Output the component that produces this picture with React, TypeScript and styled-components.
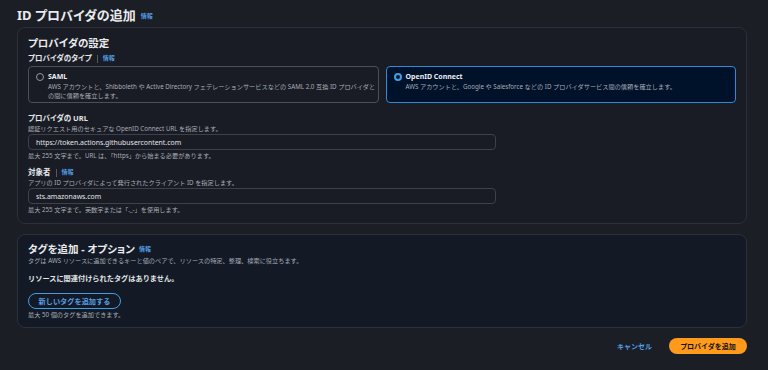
import React from "react";
import styled, { createGlobalStyle } from "styled-components";

const Global = createGlobalStyle`
  html, body { margin: 0; padding: 0; background: #1b1e25; }
  body { font-family: "Noto Sans", "Noto Sans CJK JP", sans-serif; color: #d5d9df; }
  * { box-sizing: border-box; }
`;

const Page = styled.div`
  width: 768px;
  height: 370px;
  padding: 2px 21px 0 17px;
  display: flex;
  flex-direction: column;
  overflow: hidden;
`;

const Title = styled.h1`
  margin: 0;
  height: 25px;
  display: flex;
  align-items: center;
  gap: 5px;
  font-size: 13px;
  font-weight: 700;
  color: #e9ebed;
  line-height: 20px;
  font-feature-settings: "palt";
`;

const Info = styled.span`
  font-size: 6px;
  font-weight: 700;
  color: #539fe5;
  line-height: 8px;
  position: relative;
  top: 1px;
`;

const Panel = styled.section<{ $tint?: boolean }>`
  border: 1px solid #2c3039;
  border-radius: 8px;
  background: ${(p) => (p.$tint ? "#131a26" : "#191c24")};
  padding: 7px 10px 0 10px;
  display: flex;
  flex-direction: column;
`;

const PanelHeading = styled.h2<{ $lh?: number }>`
  margin: 0;
  display: flex;
  align-items: center;
  gap: 4px;
  font-size: 10.5px;
  font-weight: 700;
  color: #e9ebed;
  font-feature-settings: "palt";
  line-height: ${(p) => p.$lh ?? 17}px;
  height: ${(p) => p.$lh ?? 17}px;
`;

const Label = styled.div<{ $top?: number }>`
  display: flex;
  align-items: center;
  font-size: 7.5px;
  font-weight: 700;
  color: #e3e6ea;
  line-height: 11px;
  height: 11px;
  font-feature-settings: "palt";
  margin-top: ${(p) => p.$top ?? 0}px;
`;

const Sep = styled.span`
  display: inline-block;
  width: 1px;
  height: 8px;
  background: #525965;
  margin: 0 5px;
`;

const SmallInfo = styled.span`
  font-size: 6px;
  font-weight: 700;
  color: #539fe5;
`;

const CardRow = styled.div`
  display: grid;
  grid-template-columns: 1fr 1fr;
  gap: 7px;
  margin-top: 2px;
`;

const Card = styled.div<{ $selected?: boolean }>`
  height: 37px;
  border-radius: 4px;
  border: 1px solid ${(p) => (p.$selected ? "#2f8bd8" : "#4a4f58")};
  background: ${(p) => (p.$selected ? "#00112a" : "transparent")};
  padding: 5px 7px 0 7px;
  display: flex;
  gap: 4px;
  overflow: hidden;
`;

const Radio = styled.span<{ $on?: boolean }>`
  flex: none;
  width: 8px;
  height: 8px;
  margin-top: 1px;
  border-radius: 50%;
  border: ${(p) => (p.$on ? "2.5px solid #3f9ee6" : "1.2px solid #8f99a6")};
  background: ${(p) => (p.$on ? "#0b1a2e" : "transparent")};
`;

const CardBody = styled.div`
  display: flex;
  flex-direction: column;
`;

const CardTitle = styled.div`
  font-size: 7px;
  font-weight: 700;
  color: #eceef0;
  line-height: 10px;
`;

const CardDesc = styled.div`
  font-size: 6.2px;
  color: #a7adb6;
  line-height: 9px;
  white-space: nowrap;
`;

const Field = styled.div<{ $top: number }>`
  display: flex;
  flex-direction: column;
  margin-top: ${(p) => p.$top}px;
`;

const Desc = styled.div`
  font-size: 6.2px;
  color: #a7adb6;
  line-height: 9px;
  height: 9px;
`;

const Input = styled.div`
  margin-top: 1px;
  width: 468px;
  height: 16px;
  border: 1px solid #3c414a;
  border-radius: 4px;
  padding: 0 7px;
  display: flex;
  align-items: center;
  font-size: 6.9px;
  color: #e3e6ea;
`;

const Help = styled.div`
  margin-top: 1px;
  font-size: 6.2px;
  color: #a7adb6;
  line-height: 9px;
`;

const Gap = styled.div<{ $h: number }>`
  height: ${(p) => p.$h}px;
  flex: none;
`;

const EmptyText = styled.div`
  font-size: 7.2px;
  font-weight: 700;
  color: #e3e6ea;
  line-height: 10px;
`;

const OutlineButton = styled.button`
  margin-top: 10px;
  align-self: flex-start;
  height: 16px;
  width: 93px;
  border: 1.2px solid #3f9ee6;
  border-radius: 9px;
  background: transparent;
  color: #539fe5;
  font-family: inherit;
  font-size: 7.2px;
  font-weight: 700;
  padding: 0;
`;

const Footer = styled.div`
  margin-top: 10px;
  display: flex;
  justify-content: flex-end;
  align-items: center;
  gap: 17px;
`;

const LinkButton = styled.span`
  font-size: 7px;
  font-weight: 700;
  color: #539fe5;
`;

const PrimaryButton = styled.button`
  width: 78px;
  height: 16px;
  border: none;
  border-radius: 9px;
  background: #ff9a1a;
  color: #0f141a;
  font-family: inherit;
  font-size: 7px;
  font-weight: 700;
  padding: 0;
`;

export default function App() {
  return (
    <>
      <Global />
      <Page>
        <Title>
          ID プロバイダの追加 <Info>情報</Info>
        </Title>
        <Panel>
          <PanelHeading>プロバイダの設定</PanelHeading>
          <Label $top={1}>
            プロバイダのタイプ<Sep />
            <SmallInfo>情報</SmallInfo>
          </Label>
          <CardRow>
            <Card>
              <Radio />
              <CardBody>
                <CardTitle>SAML</CardTitle>
                <CardDesc>
                  AWS アカウントと、Shibboleth や Active Directory フェデレーションサービスなどの SAML 2.0 互換 ID プロバイダと
                  <br />
                  の間に信頼を確立します。
                </CardDesc>
              </CardBody>
            </Card>
            <Card $selected>
              <Radio $on />
              <CardBody>
                <CardTitle>OpenID Connect</CardTitle>
                <CardDesc>
                  AWS アカウントと、Google や Salesforce などの ID プロバイダサービス間の信頼を確立します。
                </CardDesc>
              </CardBody>
            </Card>
          </CardRow>
          <Field $top={10}>
            <Label>プロバイダの URL</Label>
            <Desc>認証リクエスト用のセキュアな OpenID Connect URL を指定します。</Desc>
            <Input>https://token.actions.githubusercontent.com</Input>
            <Help>最大 255 文字まで。URL は、「https」から始まる必要があります。</Help>
          </Field>
          <Field $top={7}>
            <Label>
              対象者<Sep />
              <SmallInfo>情報</SmallInfo>
            </Label>
            <Desc>アプリの ID プロバイダによって発行されたクライアント ID を指定します。</Desc>
            <Input>sts.amazonaws.com</Input>
            <Help>最大 255 文字まで。英数字または「._-」を使用します。</Help>
          </Field>
          <Gap $h={9} />
        </Panel>
        <Gap $h={10} />
        <Panel $tint>
          <PanelHeading $lh={14}>
            タグを追加 - オプション <SmallInfo>情報</SmallInfo>
          </PanelHeading>
          <Desc>タグは AWS リソースに追加できるキーと値のペアで、リソースの特定、整理、検索に役立ちます。</Desc>
          <Gap $h={8} />
          <EmptyText>リソースに関連付けられたタグはありません。</EmptyText>
          <OutlineButton>新しいタグを追加する</OutlineButton>
          <Help>最大 50 個のタグを追加できます。</Help>
          <Gap $h={8} />
        </Panel>
        <Footer>
          <LinkButton>キャンセル</LinkButton>
          <PrimaryButton>プロバイダを追加</PrimaryButton>
        </Footer>
      </Page>
    </>
  );
}
